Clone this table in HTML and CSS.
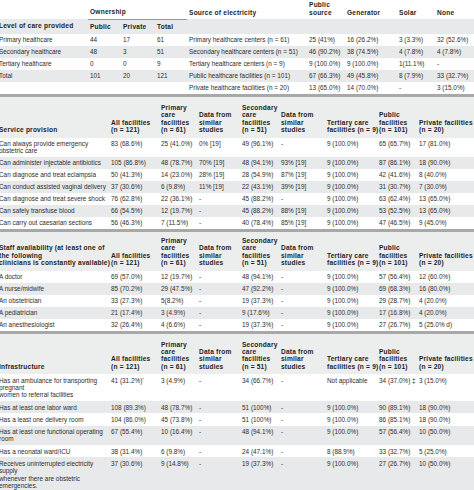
FILE: index.html
```html
<!DOCTYPE html>
<html>
<head>
<meta charset="utf-8">
<link rel="stylesheet" href="styles.css">
</head>
<body>
<div class="sheet">
  <table class="t1">
    <colgroup>
      <col class="c-lab1"><col class="c-own"><col class="c-own2"><col class="c-own3"><col class="c-src"><col class="c-pub"><col class="c-gen"><col class="c-sol"><col class="c-none">
    </colgroup>
    <thead>
      <tr class="h1">
        <th></th>
        <th colspan="3" class="own">Ownership</th>
        <th>Source of electricity</th>
        <th>Public<br>source</th>
        <th>Generator</th>
        <th>Solar</th>
        <th>None</th>
      </tr>
      <tr class="h2">
        <th>Level of care provided</th>
        <th>Public</th>
        <th>Private</th>
        <th>Total</th>
        <th></th><th></th><th></th><th></th><th></th>
      </tr>
    </thead>
    <tbody>
      <tr><td>Primary healthcare</td><td>44</td><td>17</td><td>61</td><td>Primary healthcare centers (n = 61)</td><td>25 (41%)</td><td>16 (26.2%)</td><td>3 (3.3%)</td><td>32 (52.6%)</td></tr>
      <tr><td>Secondary healthcare</td><td>48</td><td>3</td><td>51</td><td>Secondary healthcare centers (n = 51)</td><td>46 (90.2%)</td><td>38 (74.5%)</td><td>4 (7.8%)</td><td>4 (7.8%)</td></tr>
      <tr><td>Tertiary healthcare</td><td>0</td><td>0</td><td>9</td><td>Tertiary healthcare centers (n = 9)</td><td>9 (100.0%)</td><td>9 (100.0%)</td><td>1(11.1%)</td><td>-</td></tr>
      <tr><td>Total</td><td>101</td><td>20</td><td>121</td><td>Public healthcare facilities (n = 101)</td><td>67 (66.3%)</td><td>49 (45.8%)</td><td>8 (7.9%)</td><td>33 (32.7%)</td></tr>
      <tr><td></td><td></td><td></td><td></td><td>Private healthcare facilities (n = 20)</td><td>13 (65.0%)</td><td>14 (70.0%)</td><td>-</td><td>3 (15.0%)</td></tr>
    </tbody>
  </table>

  <table class="sec s2">
    <colgroup>
      <col class="c-lab"><col class="c-all"><col class="c-pri"><col class="c-d1"><col class="c-sec"><col class="c-d2"><col class="c-ter"><col class="c-pubf"><col class="c-prif">
    </colgroup>
    <thead>
      <tr class="head">
        <th>Service provision</th>
        <th>All facilities<br>(n = 121)</th>
        <th>Primary<br>care<br>facilities<br>(n = 61)</th>
        <th>Data from<br>similar<br>studies</th>
        <th>Secondary<br>care<br>facilities<br>(n = 51)</th>
        <th>Data from<br>similar<br>studies</th>
        <th>Tertiary care<br>facilities (n = 9)</th>
        <th>Public<br>facilities<br>(n = 101)</th>
        <th>Private facilities<br>(n = 20)</th>
      </tr>
    </thead>
    <tbody>
      <tr><td>Can always provide emergency<br>obstetric care</td><td>83 (68.6%)</td><td>25 (41.0%)</td><td>0% [19]</td><td>49 (96.1%)</td><td>-</td><td>9 (100.0%)</td><td>65 (65.7%)</td><td>17 (81.0%)</td></tr>
      <tr><td>Can administer injectable antibiotics</td><td>105 (86.8%)</td><td>48 (78.7%)</td><td>70% [19]</td><td>48 (94.1%)</td><td>93% [19]</td><td>9 (100.0%)</td><td>87 (86.1%)</td><td>18 (90.0%)</td></tr>
      <tr><td>Can diagnose and treat eclampsia</td><td>50 (41.3%)</td><td>14 (23.0%)</td><td>28% [19]</td><td>28 (54.9%)</td><td>87% [19]</td><td>9 (100.0%)</td><td>42 (41.6%)</td><td>8 (40.0%)</td></tr>
      <tr><td>Can conduct assisted vaginal delivery</td><td>37 (30.6%)</td><td>6 (9.8%)</td><td>11% [19]</td><td>22 (43.1%)</td><td>39% [19]</td><td>9 (100.0%)</td><td>31 (30.7%)</td><td>7 (30.0%)</td></tr>
      <tr><td>Can diagnose and treat severe shock</td><td>76 (62.8%)</td><td>22 (36.1%)</td><td>-</td><td>45 (88.2%)</td><td>-</td><td>9 (100.0%)</td><td>63 (62.4%)</td><td>13 (65.0%)</td></tr>
      <tr><td>Can safely transfuse blood</td><td>66 (54.5%)</td><td>12 (19.7%)</td><td>-</td><td>45 (88.2%)</td><td>88% [19]</td><td>9 (100.0%)</td><td>53 (52.5%)</td><td>13 (65.0%)</td></tr>
      <tr><td>Can carry out caesarian sections</td><td>56 (46.3%)</td><td>7 (11.5%)</td><td>-</td><td>40 (78.4%)</td><td>85% [19]</td><td>9 (100.0%)</td><td>47 (46.5%)</td><td>9 (45.0%)</td></tr>
    </tbody>
  </table>

  <table class="sec s3">
    <colgroup>
      <col class="c-lab"><col class="c-all"><col class="c-pri"><col class="c-d1"><col class="c-sec"><col class="c-d2"><col class="c-ter"><col class="c-pubf"><col class="c-prif">
    </colgroup>
    <thead>
      <tr class="head">
        <th>Staff availability (at least one of<br>the following<br>clinicians is constantly available)</th>
        <th>All facilities<br>(n = 121)</th>
        <th>Primary<br>care<br>facilities<br>(n = 61)</th>
        <th>Data from<br>similar<br>studies</th>
        <th>Secondary<br>care<br>facilities<br>(n = 51)</th>
        <th>Data from<br>similar<br>studies</th>
        <th>Tertiary care<br>facilities (n = 9)</th>
        <th>Public<br>facilities<br>(n = 101)</th>
        <th>Private facilities<br>(n = 20)</th>
      </tr>
    </thead>
    <tbody>
      <tr><td>A doctor</td><td>69 (57.0%)</td><td>12 (19.7%)</td><td>-</td><td>48 (94.1%)</td><td>-</td><td>9 (100.0%)</td><td>57 (56.4%)</td><td>12 (60.0%)</td></tr>
      <tr><td>A nurse/midwife</td><td>85 (70.2%)</td><td>29 (47.5%)</td><td>-</td><td>47 (92.2%)</td><td>-</td><td>9 (100.0%)</td><td>69 (68.3%)</td><td>16 (80.0%)</td></tr>
      <tr><td>An obstetrician</td><td>33 (27.3%)</td><td>5(8.2%)</td><td>-</td><td>19 (37.3%)</td><td>-</td><td>9 (100.0%)</td><td>29 (28.7%)</td><td>4 (20.0%)</td></tr>
      <tr><td>A pediatrician</td><td>21 (17.4%)</td><td>3 (4.9%)</td><td>-</td><td>9 (17.6%)</td><td>-</td><td>9 (100.0%)</td><td>17 (16.8%)</td><td>4 (20.0%)</td></tr>
      <tr><td>An anesthesiologist</td><td>32 (26.4%)</td><td>4 (6.6%)</td><td>-</td><td>19 (37.3%)</td><td>-</td><td>9 (100.0%)</td><td>27 (26.7%)</td><td>5 (25.0% d)</td></tr>
    </tbody>
  </table>

  <table class="sec s4">
    <colgroup>
      <col class="c-lab"><col class="c-all"><col class="c-pri"><col class="c-d1"><col class="c-sec"><col class="c-d2"><col class="c-ter"><col class="c-pubf"><col class="c-prif">
    </colgroup>
    <thead>
      <tr class="head">
        <th>Infrastructure</th>
        <th>All facilities<br>(n = 121)</th>
        <th>Primary<br>care<br>facilities<br>(n = 61)</th>
        <th>Data from<br>similar<br>studies</th>
        <th>Secondary<br>care<br>facilities<br>(n = 51)</th>
        <th>Data from<br>similar<br>studies</th>
        <th>Tertiary care<br>facilities (n = 9)</th>
        <th>Public<br>facilities<br>(n = 101)</th>
        <th>Private facilities<br>(n = 20)</th>
      </tr>
    </thead>
    <tbody>
      <tr><td>Has an ambulance for transporting<br>pregnant<br>women to referral facilities</td><td>41 (31.2%)<sup>*</sup></td><td>3 (4.9%)</td><td>-</td><td>34 (66.7%)</td><td>-</td><td>Not applicable</td><td>34 (37.0%) &#8225;</td><td>3 (15.0%)</td></tr>
      <tr><td>Has at least one labor ward</td><td>108 (89.3%)</td><td>48 (78.7%)</td><td>-</td><td>51 (100%)</td><td>-</td><td>9 (100.0%)</td><td>90 (89.1%)</td><td>18 (90.0%)</td></tr>
      <tr><td>Has a least one delivery room</td><td>104 (86.0%)</td><td>45 (73.8%)</td><td>-</td><td>51 (100%)</td><td>-</td><td>9 (100.0%)</td><td>86 (85.1%)</td><td>18 (90.0%)</td></tr>
      <tr><td>Has at least one functional operating<br>room</td><td>67 (55.4%)</td><td>10 (16.4%)</td><td>-</td><td>48 (94.1%)</td><td>-</td><td>9 (100.0%)</td><td>57 (56.4%)</td><td>10 (50.0%)</td></tr>
      <tr><td>Has a neonatal ward/ICU</td><td>38 (31.4%)</td><td>6 (9.8%)</td><td>-</td><td>24 (47.1%)</td><td>-</td><td>8 (88.9%)</td><td>33 (32.7%)</td><td>5 (25.0%)</td></tr>
      <tr><td>Receives uninterrupted electricity<br>supply<br>whenever there are obstetric<br>emergencies.</td><td>37 (30.6%)</td><td>9 (14.8%)</td><td>-</td><td>19 (37.3%)</td><td>-</td><td>9 (100.0%)</td><td>27 (26.7%)</td><td>10 (50.0%)</td></tr>
    </tbody>
  </table>
</div>
</body>
</html>
```
FILE: styles.css
```css
html, body {
  margin: 0;
  padding: 0;
  background: #ffffff;
}
body {
  width: 474px;
  height: 490px;
  overflow: hidden;
  font-family: "Liberation Sans", Arial, sans-serif;
  font-size: 6.4px;
  line-height: 7.4px;
  color: #2e2e2e;
}
.sheet {
  margin-left: -3px;
  width: 480px;
}
table {
  width: 480px;
  border-collapse: collapse;
  border-spacing: 0;
  table-layout: fixed;
}
td, th {
  padding: 2.3px 2px;
  text-align: left;
  vertical-align: top;
  white-space: nowrap;
  font-weight: 400;
}
th {
  font-size: 6.6px;
  font-weight: 700;
  letter-spacing: 0.2px;
  color: #1f1f1f;
}
sup {
  font-size: 4px;
  line-height: 0;
  vertical-align: 2px;
}
tbody tr:nth-child(even) {
  background: #e8e9ea;
}

/* first table */
.c-lab1 { width: 91px; }
.c-own { width: 33px; }
.c-own2 { width: 34px; }
.c-own3 { width: 32px; }
.c-src { width: 120px; }
.c-pub { width: 38px; }
.c-gen { width: 52px; }
.c-sol { width: 38px; }
.c-none { width: 42px; }

.t1 .h1 th {
  height: 19px;
  box-sizing: border-box;
  padding: 0 2px 3px;
  vertical-align: bottom;
  background: #ffffff;
}
.t1 .h1 th.own {
  border-bottom: 1px solid #9a9a9a;
}
.t1 .h2 th {
  padding: 3px 2px 4px;
  background: #e8e9ea;
}

/* lower tables */
.c-lab { width: 112px; }
.c-all { width: 50px; }
.c-pri { width: 38px; }
.c-d1 { width: 43px; }
.c-sec { width: 39px; }
.c-d2 { width: 46px; }
.c-ter { width: 52px; }
.c-pubf { width: 40px; }
.c-prif { width: 60px; }

.sec {
  border-top: 3px solid #a8a8a8;
}
.head th {
  padding: 7px 2px 4px;
  vertical-align: bottom;
  background: #eceded;
}
.s3 .head th {
  padding-top: 5px;
}
.s4 .head th {
  padding-top: 7px;
}
.s4 tbody td {
  padding-top: 2.4px;
  padding-bottom: 2.4px;
}
```
